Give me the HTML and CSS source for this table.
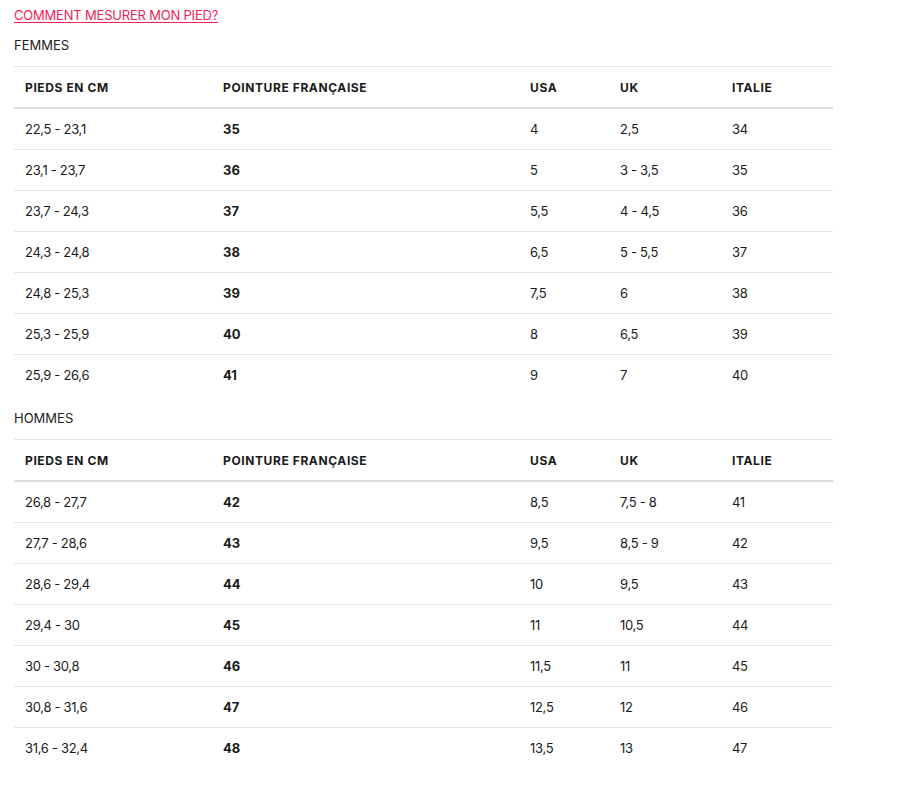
FILE: index.html
```html
<!DOCTYPE html>
<html lang="fr">
<head>
<meta charset="utf-8">
<title>Guide des tailles</title>
<link rel="stylesheet" href="styles.css">
</head>
<body>
<div class="page">
  <a class="measure-link" href="#">COMMENT MESURER MON PIED?</a>

  <div class="group-label">FEMMES</div>
  <table class="size-table">
    <thead>
      <tr><th>PIEDS EN CM</th><th>POINTURE FRANÇAISE</th><th>USA</th><th>UK</th><th>ITALIE</th></tr>
    </thead>
    <tbody>
      <tr><td>22,5 - 23,1</td><td class="fr">35</td><td>4</td><td>2,5</td><td>34</td></tr>
      <tr><td>23,1 - 23,7</td><td class="fr">36</td><td>5</td><td>3 - 3,5</td><td>35</td></tr>
      <tr><td>23,7 - 24,3</td><td class="fr">37</td><td>5,5</td><td>4 - 4,5</td><td>36</td></tr>
      <tr><td>24,3 - 24,8</td><td class="fr">38</td><td>6,5</td><td>5 - 5,5</td><td>37</td></tr>
      <tr><td>24,8 - 25,3</td><td class="fr">39</td><td>7,5</td><td>6</td><td>38</td></tr>
      <tr><td>25,3 - 25,9</td><td class="fr">40</td><td>8</td><td>6,5</td><td>39</td></tr>
      <tr><td>25,9 - 26,6</td><td class="fr">41</td><td>9</td><td>7</td><td>40</td></tr>
    </tbody>
  </table>

  <div class="group-label">HOMMES</div>
  <table class="size-table">
    <thead>
      <tr><th>PIEDS EN CM</th><th>POINTURE FRANÇAISE</th><th>USA</th><th>UK</th><th>ITALIE</th></tr>
    </thead>
    <tbody>
      <tr><td>26,8 - 27,7</td><td class="fr">42</td><td>8,5</td><td>7,5 - 8</td><td>41</td></tr>
      <tr><td>27,7 - 28,6</td><td class="fr">43</td><td>9,5</td><td>8,5 - 9</td><td>42</td></tr>
      <tr><td>28,6 - 29,4</td><td class="fr">44</td><td>10</td><td>9,5</td><td>43</td></tr>
      <tr><td>29,4 - 30</td><td class="fr">45</td><td>11</td><td>10,5</td><td>44</td></tr>
      <tr><td>30 - 30,8</td><td class="fr">46</td><td>11,5</td><td>11</td><td>45</td></tr>
      <tr><td>30,8 - 31,6</td><td class="fr">47</td><td>12,5</td><td>12</td><td>46</td></tr>
      <tr><td>31,6 - 32,4</td><td class="fr">48</td><td>13,5</td><td>13</td><td>47</td></tr>
    </tbody>
  </table>
</div>
</body>
</html>
```
FILE: styles.css
```css
html, body {
  margin: 0;
  padding: 0;
  background: #fff;
}
.page {
  padding: 5px 14px 20px 14px;
  font-family: Inter, "Noto Sans", sans-serif;
  font-size: 13px;
  color: #1a1a1a;
  width: 819px;
}
.measure-link {
  display: block;
  line-height: 20px;
  color: #f01e5a;
  letter-spacing: -0.2px;
  text-decoration: underline;
  text-underline-offset: 2px;
  width: max-content;
}
.group-label {
  line-height: 20px;
  margin-top: 10px;
  margin-bottom: 11px;
  color: #222;
}
.size-table + .group-label {
  margin-top: 13px;
}
.size-table {
  width: 819px;
  border-collapse: collapse;
  table-layout: fixed;
  border-top: 1px solid #e4e4e8;
}
.size-table th,
.size-table td {
  padding: 0 11px;
  height: 40px;
  text-align: left;
  vertical-align: middle;
}
.size-table td {
  letter-spacing: -0.3px;
}
.size-table th {
  font-weight: 700;
  font-size: 12px;
  letter-spacing: 0.6px;
  border-bottom: 2px solid #dcdde2;
}
.size-table th:nth-child(1), .size-table td:nth-child(1) { width: 176px; }
.size-table th:nth-child(2), .size-table td:nth-child(2) { width: 285px; }
.size-table th:nth-child(3), .size-table td:nth-child(3) { width: 68px; }
.size-table th:nth-child(4), .size-table td:nth-child(4) { width: 90px; }
.size-table th:nth-child(5), .size-table td:nth-child(5) { width: 90px; }
.size-table tbody tr {
  border-bottom: 1px solid #e4e4e8;
}
.size-table tbody tr:last-child {
  border-bottom: none;
}
.size-table td.fr {
  font-weight: 700;
  letter-spacing: 0;
}
```
